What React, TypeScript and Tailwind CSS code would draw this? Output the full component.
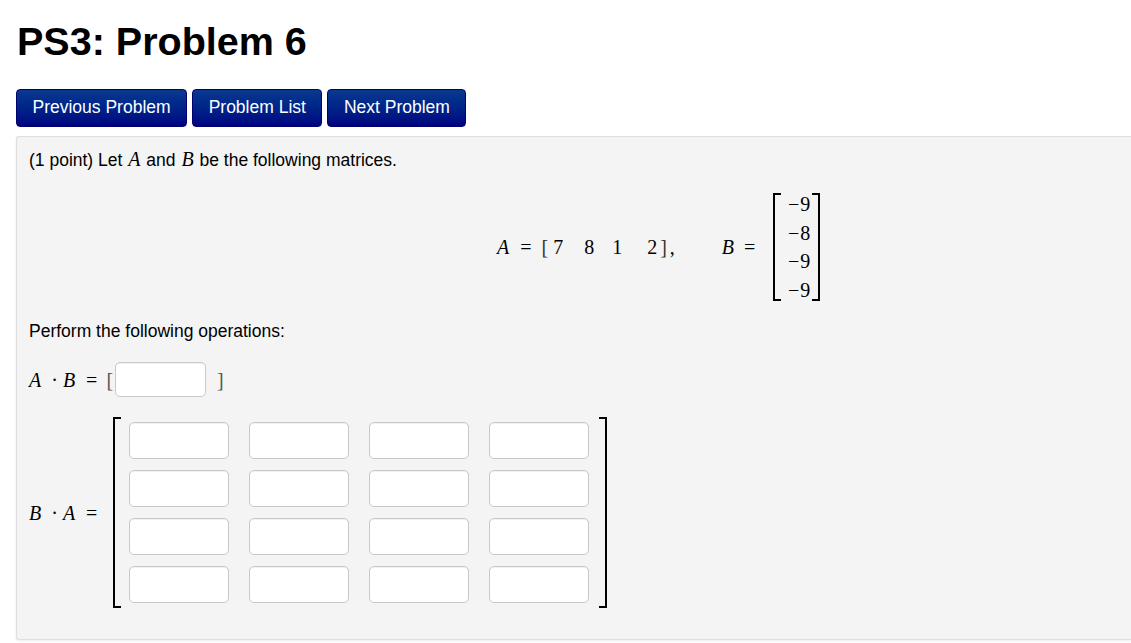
import React from 'react';

const navButtons = ['Previous Problem', 'Problem List', 'Next Problem'];

const bColumn = ['9', '8', '9', '9'];

const mathFont = { fontFamily: '"Liberation Serif", "DejaVu Serif", serif' };

const Var = ({ children }: { children: React.ReactNode }) => (
    <span className="mx-[1px] text-[20px] leading-none italic" style={mathFont}>
        {children}
    </span>
);

const Bracket = ({ side, className = '' }: { side: 'left' | 'right'; className?: string }) => (
    <div
        className={`w-[8px] self-stretch border-y-2 border-black ${
            side === 'left' ? 'border-l-2' : 'border-r-2'
        } ${className}`}
    />
);

const AnswerBox = ({ className = '' }: { className?: string }) => (
    <input
        type="text"
        className={`rounded-[5px] border border-[#c9c9c9] bg-white shadow-[inset_0_1px_1px_rgba(0,0,0,0.06)] outline-none ${className}`}
    />
);

export default function App() {
    return (
        <div
            className="h-[643px] w-full overflow-hidden bg-white text-[17.5px] text-black"
            style={{ fontFamily: '"Liberation Sans", Arial, sans-serif' }}
        >
            <h1 className="ml-[17px] mt-[20px] text-[39.5px] font-bold leading-[43px]">PS3: Problem 6</h1>

            <div className="ml-4 mt-[26px] flex gap-[5px]">
                {navButtons.map((label) => (
                    <button
                        key={label}
                        type="button"
                        className="h-[38px] rounded-[4px] border border-[#00006e] bg-linear-to-b from-[#0c3990] to-[#000080] px-[15.5px] text-[17.5px] leading-none text-white"
                    >
                        {label}
                    </button>
                ))}
            </div>

            <div className="ml-4 mt-[9px] h-[504px] rounded-l-[3px] border border-r-0 border-[#dedede] bg-[#f4f4f4] pl-3 pt-[11px] shadow-[0_1px_3px_rgba(0,0,0,0.08)]">
                <p className="h-[24px] leading-[24px]">
                    (1 point) Let <Var>A</Var> and <Var>B</Var> be the following matrices.
                </p>

                {/* display matrices */}
                <div className="mt-[21px] flex h-[108px] items-center pl-[468px] text-[20px]" style={mathFont}>
                    <span className="italic">A</span>
                    <span className="ml-[11px]">=</span>
                    <span className="ml-[10px] text-[#333]">[</span>
                    <span className="ml-[5px]">7</span>
                    <span className="ml-[21px]">8</span>
                    <span className="ml-[18px]">1</span>
                    <span className="ml-[25px]">2</span>
                    <span className="ml-[3px] text-[#333]">]</span>
                    <span className="ml-[3px]">,</span>

                    <span className="ml-[47px] italic">B</span>
                    <span className="ml-[10px]">=</span>
                    <div className="ml-[18px] flex h-full">
                        <Bracket side="left" />
                        <div className="flex w-[31px] flex-col justify-center gap-[6px] pr-[2px] text-right leading-[22.5px]">
                            {bColumn.map((n, i) => (
                                <span key={i}>
                                    −<span className="ml-[1px]">{n}</span>
                                </span>
                            ))}
                        </div>
                        <Bracket side="right" />
                    </div>
                </div>

                <p className="mt-[18px] leading-[24px]">Perform the following operations:</p>

                {/* A · B */}
                <div className="mt-[19px] flex h-[35px] items-center text-[20px]" style={mathFont}>
                    <span className="italic">A</span>
                    <span className="ml-[10px]">·</span>
                    <span className="ml-[5px] italic">B</span>
                    <span className="ml-[11px]">=</span>
                    <span className="ml-[9px] text-[#555]">[</span>
                    <AnswerBox className="ml-[2px] h-[35px] w-[91px]" />
                    <span className="ml-[11px] text-[#555]">]</span>
                </div>

                {/* B · A */}
                <div className="mt-[20px] flex items-center">
                    <div className="flex items-center text-[20px]" style={mathFont}>
                        <span className="italic">B</span>
                        <span className="ml-[10px]">·</span>
                        <span className="ml-[5px] italic">A</span>
                        <span className="ml-[11px]">=</span>
                    </div>
                    <div className="ml-[16px] flex h-[191px]">
                        <Bracket side="left" />
                        <div className="ml-[8px] mr-[10px] grid grid-cols-4 content-center gap-x-[20px] gap-y-[11px]">
                            {Array.from({ length: 16 }).map((_, i) => (
                                <AnswerBox key={i} className="h-[37px] w-[100px]" />
                            ))}
                        </div>
                        <Bracket side="right" />
                    </div>
                </div>
            </div>
        </div>
    );
}
